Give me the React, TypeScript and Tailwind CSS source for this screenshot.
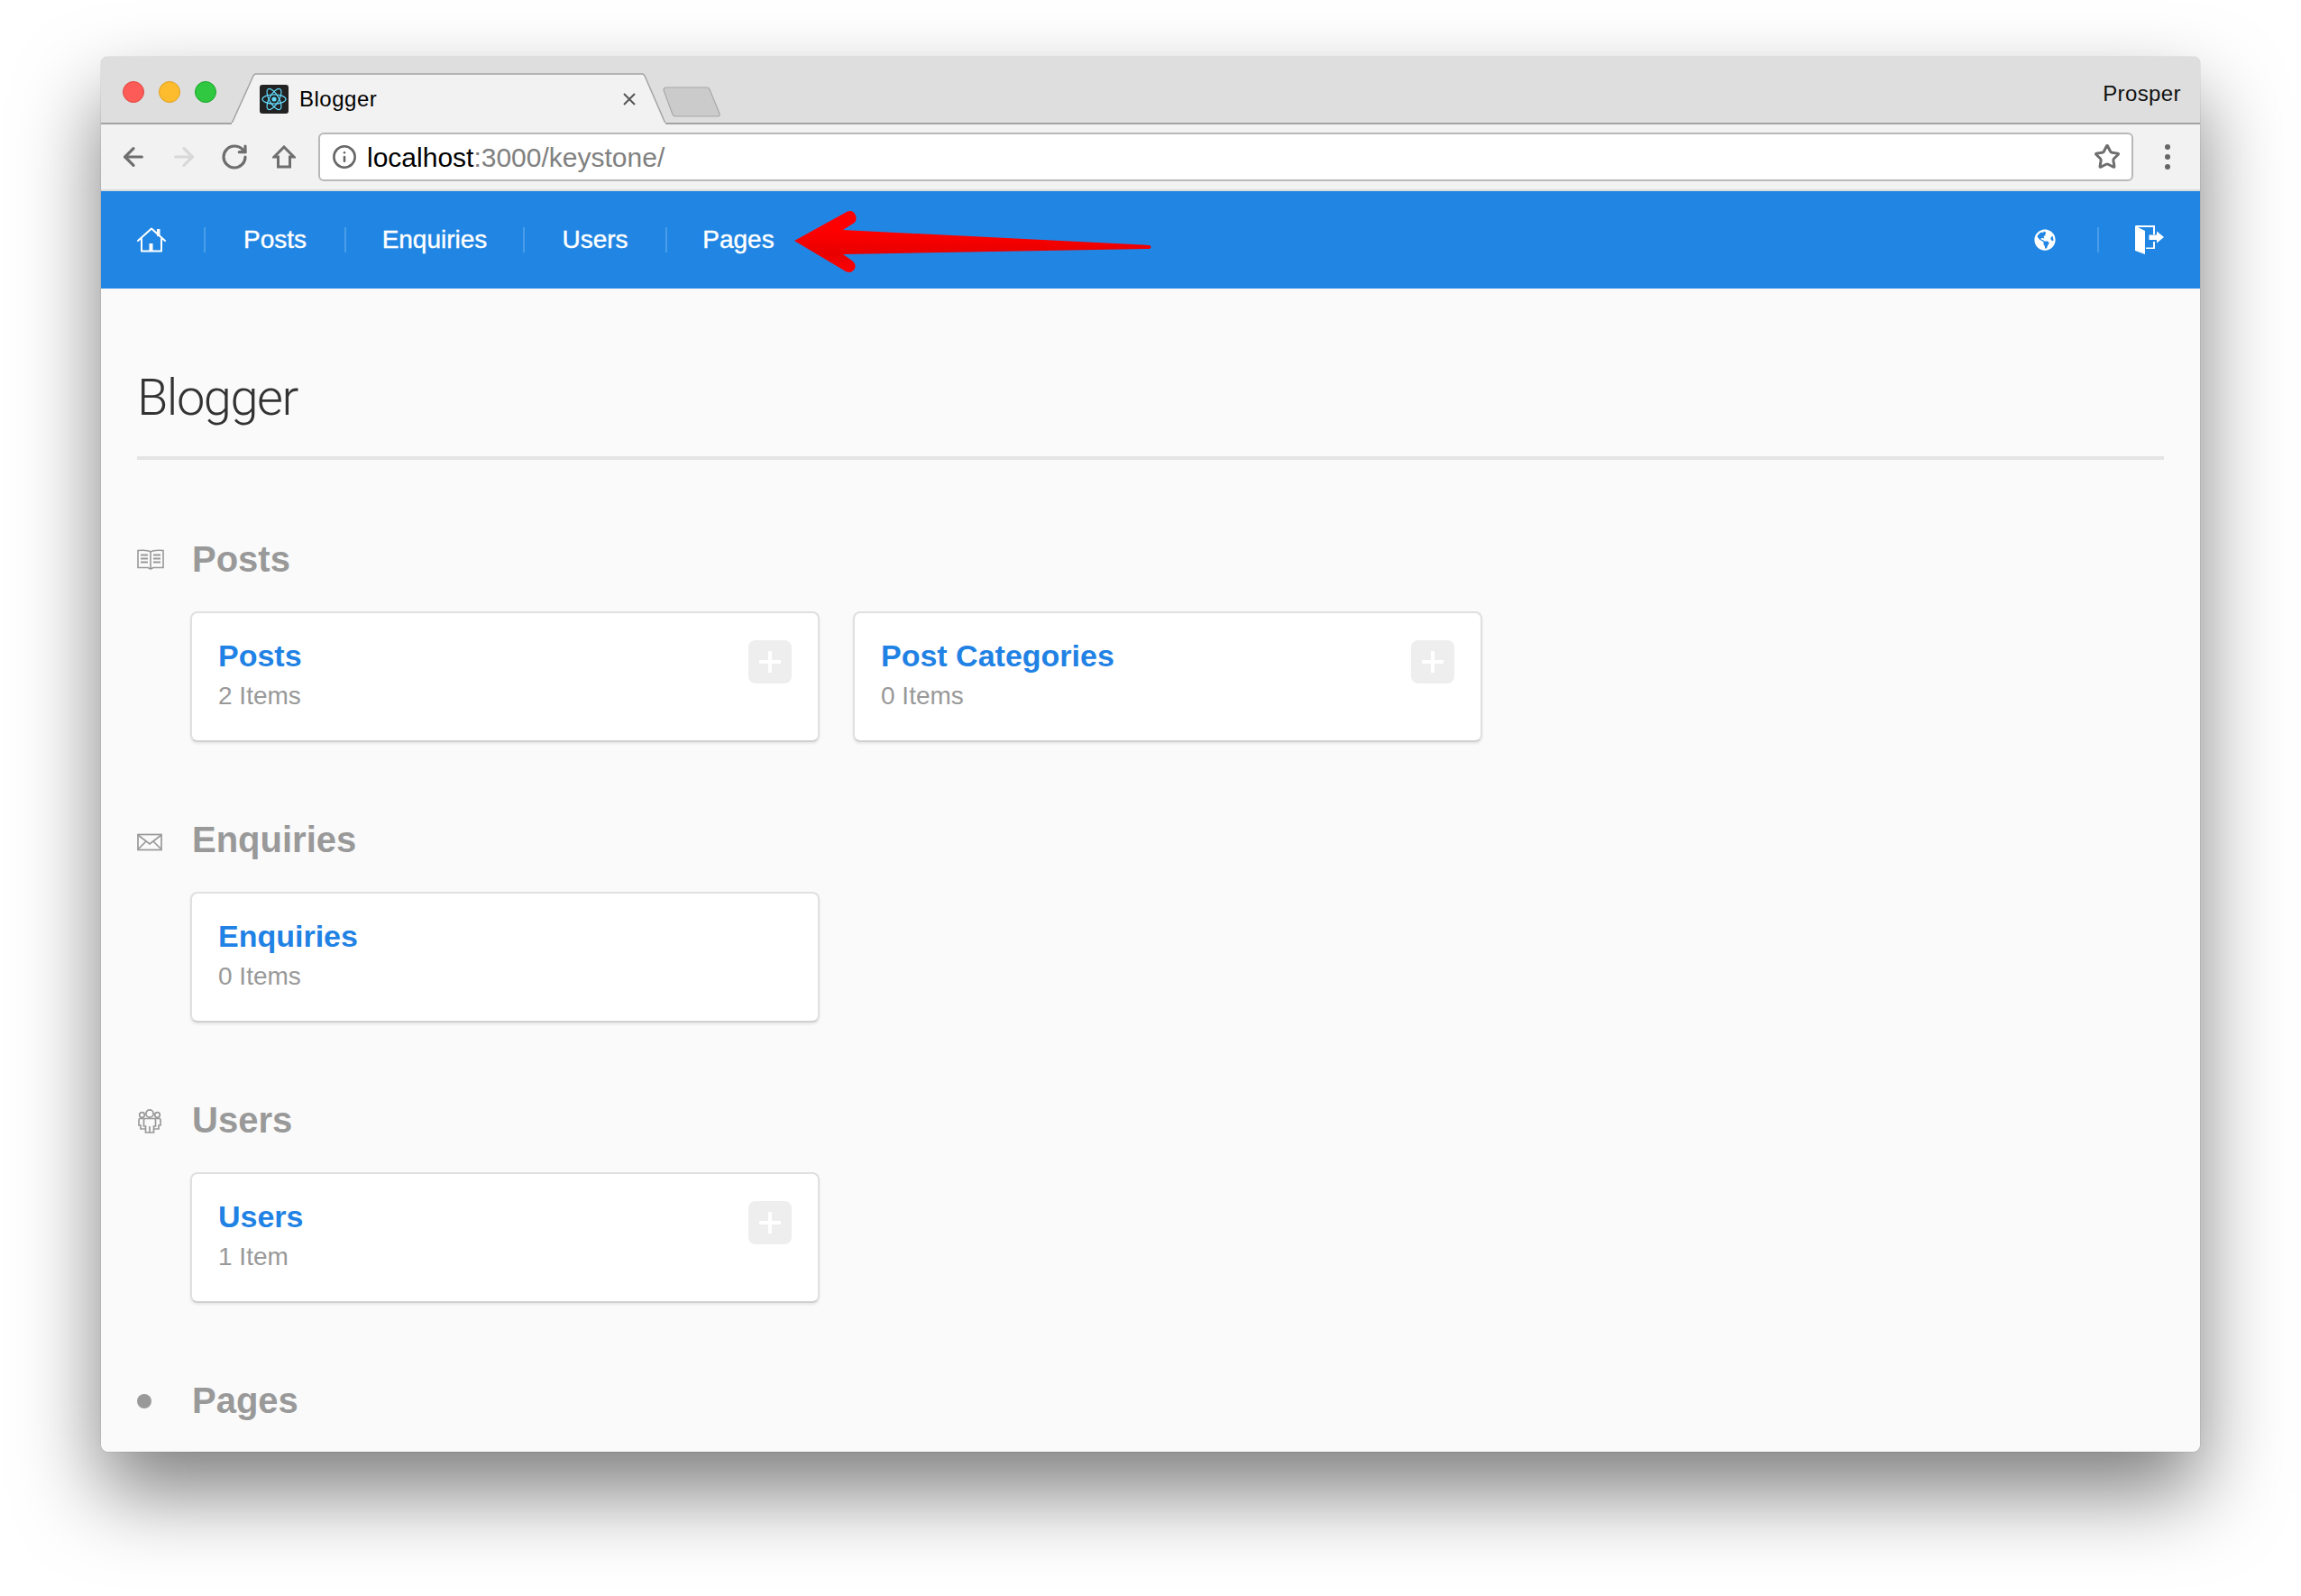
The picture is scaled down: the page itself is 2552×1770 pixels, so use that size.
import type { ReactNode } from 'react';
import { ArrowLeft, ArrowRight, RotateCw, Info, Star } from 'lucide-react';
import { FaGlobeAmericas } from 'react-icons/fa';

const SANS = "font-['Liberation_Sans',Arial,sans-serif]";

const ReactIcon = () => (
  <svg viewBox="0 0 32 32" className="h-8 w-8 rounded-[3px] bg-[#222222]">
    <g fill="none" stroke="#61dafb" strokeWidth="1.2">
      <ellipse cx="16" cy="16" rx="13" ry="5.2" />
      <ellipse cx="16" cy="16" rx="13" ry="5.2" transform="rotate(60 16 16)" />
      <ellipse cx="16" cy="16" rx="13" ry="5.2" transform="rotate(120 16 16)" />
    </g>
    <circle cx="16" cy="16" r="2.6" fill="#61dafb" />
  </svg>
);

const ChromeHome = () => (
  <svg viewBox="0 0 26 26" className="h-[26px] w-[26px]" fill="none" stroke="#6e6e6e" strokeWidth="3" strokeLinejoin="miter">
    <path d="M13 2 L24 13 H19.5 V24 H6.5 V13 H2 Z" />
  </svg>
);

const NavHome = () => (
  <svg viewBox="0 0 32 28" className="h-7 w-8" fill="none" stroke="white" strokeWidth="2" strokeLinejoin="round" strokeLinecap="round">
    <path d="M1 15 L16 1.5 L31 15" />
    <path d="M5 13 V26.5 H27 V13" />
    <rect x="13.5" y="18" width="4" height="8.5" fill="white" stroke="none" />
    <rect x="22" y="2" width="3.5" height="8" fill="white" stroke="none" />
  </svg>
);

const SignOut = () => (
  <svg viewBox="0 0 32 32" className="h-8 w-8" fill="white">
    <path d="M0 1 V28 L11 32 V6 L3 2 H20 V10 H22 V0 H2 C1 0 0 0 0 1 Z" />
    <path d="M12 26 H22 V18 H20 V24.5 H12 Z" />
    <path d="M15.5 10.5 H24 V6.5 L32 13 L24 19.5 V16 H15.5 Z" />
  </svg>
);

const BookIcon = () => (
  <svg viewBox="0 0 30 24" className="h-6 w-[30px]" fill="none" stroke="#999999" strokeWidth="1.6">
    <path d="M15 4 C12 2 6 2 1 2.5 V21.5 H12 L15 23 L18 21.5 H29 V2.5 C24 2 18 2 15 4 V22" />
    <path d="M4 7.5 H12 M4 11.5 H12 M4 15.5 H12 M18 7.5 H26 M18 11.5 H26 M18 15.5 H26" strokeWidth="2" />
  </svg>
);

const MailIcon = () => (
  <svg viewBox="0 0 28 20" className="mt-[6px] h-5 w-7" fill="none" stroke="#999999" strokeWidth="1.7">
    <rect x="1" y="1.5" width="26" height="17" />
    <path d="M1 2 L14 12 L27 2 M1 18 L10 9 M27 18 L18 9" />
  </svg>
);

const UsersIcon = () => (
  <svg viewBox="0 0 26 27" className="ml-px mt-[3px] h-[27px] w-[26px]" fill="none" stroke="#999999" strokeWidth="1.7">
    <circle cx="13" cy="5" r="4.1" />
    <circle cx="4.5" cy="6.5" r="2.8" />
    <circle cx="21.5" cy="6.5" r="2.8" />
    <path d="M8 10.5 H18 Q19.5 10.5 19.5 12 V19 H17.5 V26 H8.5 V19 H6.5 V12 Q6.5 10.5 8 10.5 Z M13 19 V26" />
    <path d="M6.5 10.5 H2.5 Q1 10.5 1 12 V18 H3 V22 H8.5 M19.5 10.5 H23.5 Q25 10.5 25 12 V18 H23 V22 H17.5" />
  </svg>
);

const DotIcon = () => (
  <div className="flex h-6 w-[30px] items-center">
    <div className="mt-0.5 h-4 w-4 rounded-full bg-[#999999]" />
  </div>
);

const Arrow = () => (
  <svg viewBox="0 0 396 70" className="absolute left-[769px] top-[21px] h-[70px] w-[396px]">
    <defs>
      <linearGradient id="arrowFill" x1="0" y1="0" x2="0" y2="1">
        <stop offset="0.3" stopColor="#ff0000" />
        <stop offset="0.7" stopColor="#e80000" />
        <stop offset="1" stopColor="#ff0000" />
      </linearGradient>
    </defs>
    <path
      d="M0 34 L58 2 Q65 -1 68 6 Q70 12 65 15 L54 22 L394 39 Q397 41 394 43 L54 49 L64 56 Q69 60 67 65 Q63 71 57 68 Z"
      fill="url(#arrowFill)"
    />
  </svg>
);

const NavDivider = () => <div className="h-7 w-0.5 bg-[#4a9de9]" />;

const NavLink = ({ label, width }: { label: string; width: string }) => (
  <div className={`flex items-center justify-center text-[28px] text-white [-webkit-text-stroke:0.4px_white] ${width}`}>{label}</div>
);

const Card = ({ title, count, add = true }: { title: string; count: string; add?: boolean }) => (
  <div className="relative h-[145px] w-[698px] rounded-lg border-2 border-[#e0e0e0] border-b-[#d0d0d0] bg-white pl-[29px] pt-[26px] shadow-[0_2px_3px_rgba(0,0,0,0.08)]">
    <div className="text-[34px] leading-[42px] font-bold text-[#1f82e4]">{title}</div>
    <div className="mt-1 text-[28px] leading-[40px] text-[#999999]">{count}</div>
    {add && (
      <div className="absolute right-[29px] top-[30px] flex h-12 w-12 items-center justify-center rounded-lg bg-[#eeeeee]">
        <div className="relative h-6 w-6">
          <div className="absolute left-[10px] top-0 h-6 w-1 bg-white" />
          <div className="absolute left-0 top-[10px] h-1 w-6 bg-white" />
        </div>
      </div>
    )}
  </div>
);

const Section = ({ title, icon, children }: { title: string; icon: ReactNode; children?: ReactNode }) => (
  <div className="mt-[85px] first:mt-0">
    <div className="flex h-[46px] items-center">
      <div className="flex w-[61px] items-center">{icon}</div>
      <div className="text-[40px] font-bold text-[#999999]">{title}</div>
    </div>
    {children && <div className="ml-[59px] mt-[35px] flex gap-[37px]">{children}</div>}
  </div>
);

export default function App() {
  return (
    <div className={`h-[1770px] w-[2552px] overflow-hidden bg-white pl-[112px] pt-[63px] ${SANS}`}>
      <div className="relative h-[1547px] w-[2328px] rounded-lg shadow-[0_0_1px_rgba(0,0,0,0.6),0_45px_90px_rgba(0,0,0,0.5)]">
        <div className="flex h-full flex-col overflow-hidden rounded-lg">
          {/* tab strip */}
          <div className="relative flex h-[75px] shrink-0 border-b-2 border-[#a3a3a3] bg-[#dedede]">
            <div className="ml-6 mt-[27px] flex gap-[16px]">
              <div className="h-6 w-6 rounded-full border border-[#e14640] bg-[#fc5b57]" />
              <div className="h-6 w-6 rounded-full border border-[#dfa023] bg-[#fdbc2e]" />
              <div className="h-6 w-6 rounded-full border border-[#1ba52b] bg-[#2fc840]" />
            </div>
            <svg viewBox="0 0 483 57" className="absolute bottom-[-2px] left-[144px] h-[57px] w-[483px]">
              <path d="M1 56 L25 3 Q26 1 28 1 L456 1 Q458 1 459 3 L482 56" fill="#f2f2f2" stroke="#a3a3a3" strokeWidth="1.5" />
              <rect x="1" y="55" width="481" height="3" fill="#f2f2f2" />
            </svg>
            <svg viewBox="0 0 66 34" className="absolute left-[622px] top-[33px] h-[34px] w-[66px]">
              <path d="M2 4 Q2 1 5 1 L50 1 Q52 1 53 3 L64 30 Q65 33 61 33 L15 33 Q13 33 12 31 Z" fill="#cbcbcb" stroke="#a8a8a8" strokeWidth="1.2" />
            </svg>
            <div className="absolute left-[176px] top-[31px] flex items-center">
              <ReactIcon />
              <span className="ml-3 text-2xl leading-8 tracking-[0.5px] text-black">Blogger</span>
            </div>
            <svg viewBox="0 0 14 14" className="absolute left-[579px] top-10 h-3.5 w-3.5" stroke="#555555" strokeWidth="2">
              <path d="M1 1 L13 13 M13 1 L1 13" />
            </svg>
            <div className="absolute right-[21px] top-[27px] text-2xl leading-7 tracking-[0.4px] text-[#111111]">Prosper</div>
          </div>
          {/* toolbar */}
          <div className="flex h-[74px] shrink-0 items-center border-b-2 border-[#dcdcdc] bg-[#f2f2f2]">
            <div className="flex w-[241px] items-center">
              <ArrowLeft className="ml-5 h-8 w-8" color="#6e6e6e" strokeWidth={2.4} />
              <ArrowRight className="ml-6 h-8 w-8" color="#d8d8d8" strokeWidth={2.4} />
              <RotateCw className="ml-6 h-8 w-8" color="#6e6e6e" strokeWidth={2.4} />
              <div className="ml-[26px]">
                <ChromeHome />
              </div>
            </div>
            <div className="flex h-[54px] w-[2013px] items-center rounded-md border-2 border-[#b8b8b8] bg-white pl-[13px] pr-3">
              <Info className="h-7 w-7" color="#666666" strokeWidth={2.2} />
              <div className="ml-[11px] flex-1 pt-0.5 text-[30px] leading-none text-[#808080]">
                <span className="text-black">localhost</span>:3000/keystone/
              </div>
              <Star className="h-[30px] w-[30px]" color="#6e6e6e" strokeWidth={2.4} />
            </div>
            <div className="ml-[35px] flex flex-col gap-[5px]">
              <div className="h-1.5 w-1.5 rounded-full bg-[#666666]" />
              <div className="h-1.5 w-1.5 rounded-full bg-[#666666]" />
              <div className="h-1.5 w-1.5 rounded-full bg-[#666666]" />
            </div>
          </div>
          {/* app nav */}
          <div className="relative flex h-[108px] shrink-0 items-center bg-[#2186e3]">
            <div className="ml-10 w-[74px]">
              <NavHome />
            </div>
            <NavDivider />
            <NavLink label="Posts" width="w-[154px]" />
            <NavDivider />
            <NavLink label="Enquiries" width="w-[196px]" />
            <NavDivider />
            <NavLink label="Users" width="w-[156px]" />
            <NavDivider />
            <NavLink label="Pages" width="w-[158px]" />
            <div className="ml-auto">
              <FaGlobeAmericas className="h-6 w-6" color="white" />
            </div>
            <div className="ml-[46px]">
              <NavDivider />
            </div>
            <div className="ml-10 mr-10">
              <SignOut />
            </div>
            <Arrow />
          </div>
          {/* page */}
          <div className="min-h-0 flex-1 bg-[#fafafa] px-10">
            <div className="mt-[89px] border-b-4 border-[#e4e4e4] pb-[33px] font-['Roboto'] text-[56px] leading-[64px] font-light tracking-[-1.5px] text-[#333333]">
              Blogger
            </div>
            <div className="mt-[87px]">
              <Section title="Posts" icon={<BookIcon />}>
                <Card title="Posts" count="2 Items" />
                <Card title="Post Categories" count="0 Items" />
              </Section>
              <Section title="Enquiries" icon={<MailIcon />}>
                <Card title="Enquiries" count="0 Items" add={false} />
              </Section>
              <Section title="Users" icon={<UsersIcon />}>
                <Card title="Users" count="1 Item" />
              </Section>
              <Section title="Pages" icon={<DotIcon />} />
            </div>
          </div>
        </div>
      </div>
    </div>
  );
}
